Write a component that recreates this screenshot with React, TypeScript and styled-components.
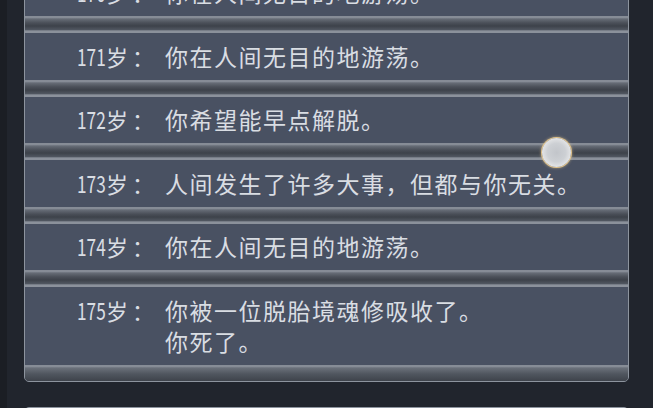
import React from "react";
import styled, { createGlobalStyle } from "styled-components";

const GlobalStyle = createGlobalStyle`
  html, body {
    margin: 0;
    padding: 0;
    background: #20242c;
  }
  #root {
    height: 100vh;
  }
`;

const Stage = styled.div`
  position: relative;
  height: 100vh;
  overflow: hidden;
  box-sizing: border-box;
  padding: 0 24px;
  background: linear-gradient(to right, #1b1e24 0, #1b1e24 7px, #21252d 7px, #21252d 100%);
  font-family: "Noto Sans CJK SC", "Noto Sans", sans-serif;
`;

const Panel = styled.section<{ $offset?: number }>`
  margin-top: ${(p) => p.$offset ?? 0}px;
  border: 1px solid #8d949e;
  border-radius: 5px;
  background: #495162;
  overflow: hidden;
`;

const NextPanel = styled.section`
  margin-top: 25px;
  height: 60px;
  border: 1px solid #8d949e;
  border-radius: 5px;
  background: #2a2f38;
`;

const Row = styled.div`
  display: grid;
  grid-template-columns: 88px 1fr;
  align-items: start;
  padding: 7.5px 0 8px 52px;
  color: #d9dde3;
  font-size: 22px;
  line-height: 31px;
`;

const Age = styled.div`
  height: 31px;
  white-space: nowrap;
  letter-spacing: 4px;
`;

const Digits = styled.span`
  display: inline-block;
  font-size: 24px;
  line-height: 24px;
  letter-spacing: 0;
  transform: scaleX(0.72);
  transform-origin: left center;
  margin-right: -11px;
`;

const Lines = styled.div`
  display: flex;
  flex-direction: column;
  font-size: 23px;
  line-height: 31px;
  letter-spacing: 1.5px;
`;

const Line = styled.span`
  display: block;
  height: 31px;
`;

const Separator = styled.div`
  height: 17px;
  background: linear-gradient(
    to bottom,
    #868c96 0,
    #868c96 1.5px,
    #666c76 3px,
    #4a4f58 7px,
    #3d424a 10px,
    #4f555f 13.5px,
    #8b919b 15px,
    #8b919b 17px
  );
`;

const EndGroove = styled.div`
  height: 16px;
  background: linear-gradient(
    to bottom,
    #868c96 0,
    #868c96 1.5px,
    #6a707a 3px,
    #50565f 9px,
    #3e434b 16px
  );
`;

const TouchDot = styled.div`
  position: absolute;
  left: 542px;
  top: 138px;
  width: 29px;
  height: 29px;
  border-radius: 50%;
  background: radial-gradient(circle at 50% 50%, #c2c5ca 0%, #cdd0d4 45%, #f0f0f0 85%, #f6f2e6 100%);
  box-shadow: 0 0 0 1px rgba(232, 200, 140, 0.9), 0 0 3px 1px rgba(240, 210, 150, 0.6);
`;

type Entry = { age: number; lines: string[] };

const entries: Entry[] = [
  { age: 170, lines: ["你在人间无目的地游荡。"] },
  { age: 171, lines: ["你在人间无目的地游荡。"] },
  { age: 172, lines: ["你希望能早点解脱。"] },
  { age: 173, lines: ["人间发生了许多大事，但都与你无关。"] },
  { age: 174, lines: ["你在人间无目的地游荡。"] },
  { age: 175, lines: ["你被一位脱胎境魂修吸收了。", "你死了。"] },
];

export default function App() {
  return (
    <>
      <GlobalStyle />
      <Stage>
        <Panel $offset={-31.5}>
          {entries.map((e, i) => (
            <React.Fragment key={e.age}>
              <Row>
                <Age>
                  <Digits>{e.age}</Digits>岁：
                </Age>
                <Lines>
                  {e.lines.map((l) => (
                    <Line key={l}>{l}</Line>
                  ))}
                </Lines>
              </Row>
              {i < entries.length - 1 ? <Separator /> : <EndGroove />}
            </React.Fragment>
          ))}
        </Panel>
        <NextPanel />
        <TouchDot />
      </Stage>
    </>
  );
}
